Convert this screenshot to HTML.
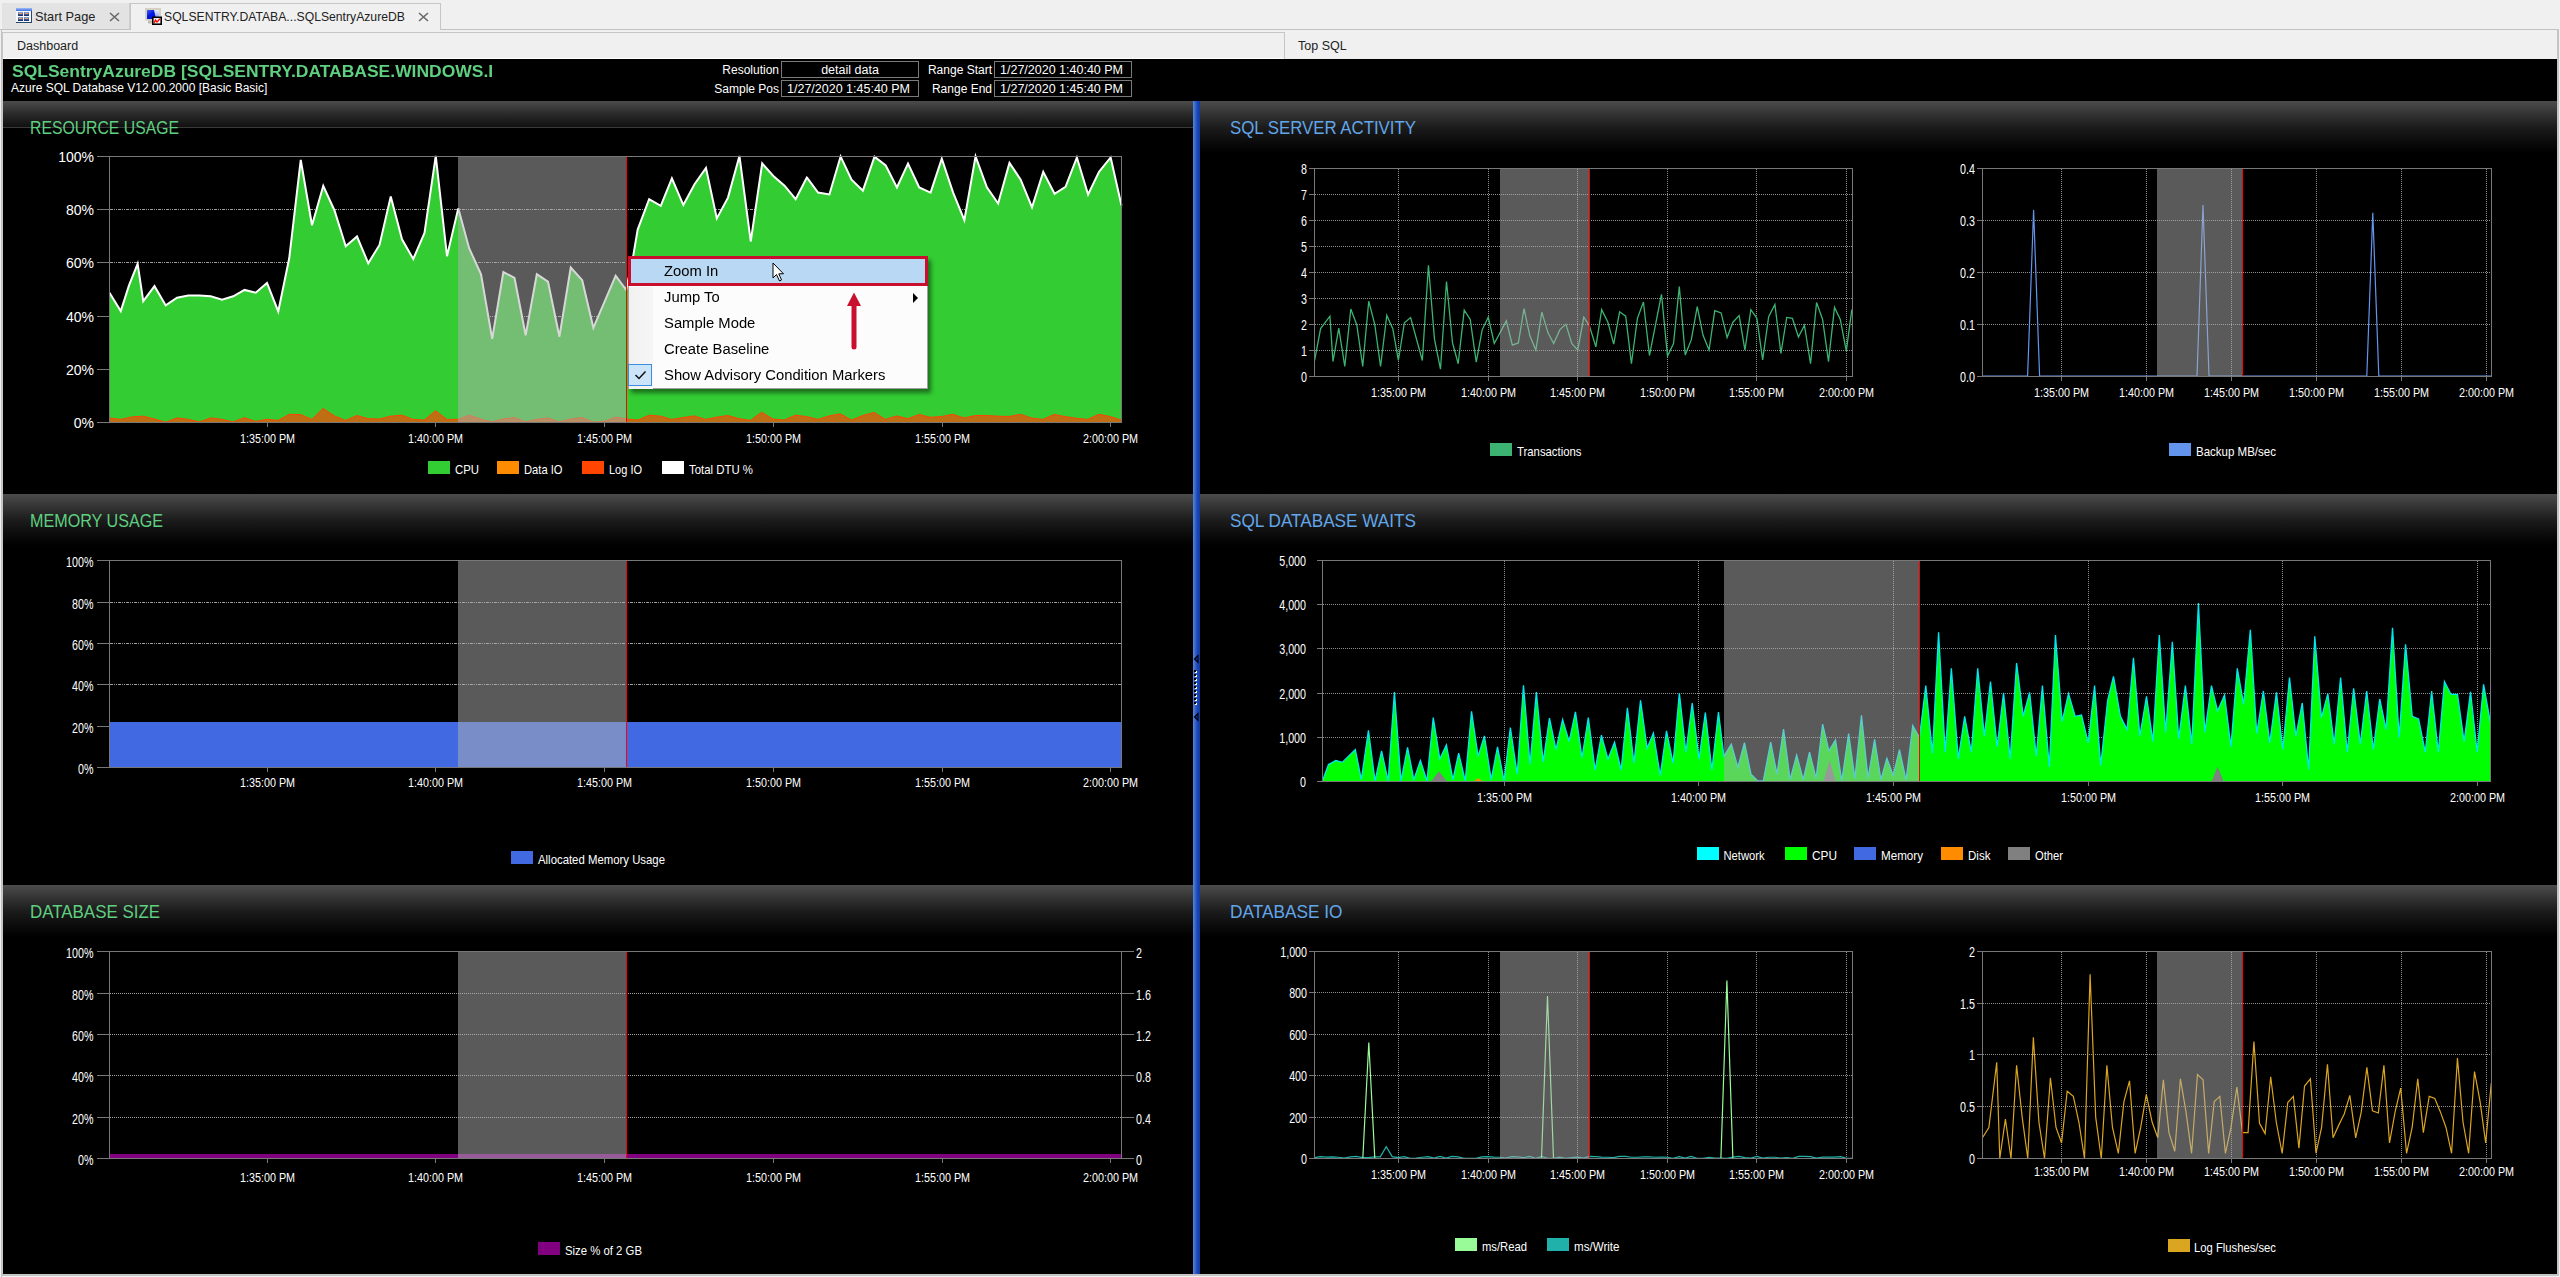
<!DOCTYPE html>
<html><head><meta charset="utf-8"><style>
*{box-sizing:border-box}
html,body{margin:0;padding:0}
body{width:2560px;height:1277px;background:#f0f0f0;position:relative;overflow:hidden;font-family:"Liberation Sans", sans-serif;color:#000}
.abs{position:absolute}
.tab{position:absolute;font-size:13px;white-space:nowrap;line-height:15px}
.fld{position:absolute;border:1px solid #7a7a7a;height:17px;color:#fff;font-size:12.5px;line-height:16px;white-space:nowrap}
.lbl{position:absolute;color:#fff;font-size:12px;white-space:nowrap;text-align:right;line-height:16px}
.mi{position:absolute;left:35px;font-size:15.4px;white-space:nowrap;color:#000;line-height:17px;transform:scaleX(0.962);transform-origin:0 0}
</style></head><body>
<div class="abs" style="left:2px;top:3px;width:128px;height:26px;background:#e3e3e3;border-right:1px solid #cfcfcf"></div>
<div class="abs" style="left:0;top:29px;width:2559px;height:1px;background:#c2c2c2"></div>
<div class="abs" style="left:130px;top:3px;width:311px;height:27px;background:#f0f0f0;border:1px solid #c6c6c6;border-bottom:none"></div>
<div class="abs" style="left:1px;top:29px;width:1px;height:1248px;background:#c2c2c2"></div>
<div class="abs" style="left:2px;top:32px;width:1283px;height:1px;background:#c6c6c6"></div><div class="abs" style="left:3px;top:58px;width:1281px;height:1px;background:#ffffff"></div>
<div class="abs" style="left:2px;top:32px;width:1px;height:1243px;background:#c6c6c6"></div>
<div class="abs" style="left:2557px;top:29px;width:2px;height:1247px;background:#c4c4c4"></div>
<div class="abs" style="left:1px;top:1274px;width:2558px;height:2px;background:#c4c4c4"></div>
<svg class="abs" style="left:16px;top:8px" width="17" height="16" viewBox="0 0 17 16">
<defs><linearGradient id="tb" x1="0" y1="0" x2="0" y2="1"><stop offset="0" stop-color="#9cbcf8"/><stop offset="1" stop-color="#3c6ee4"/></linearGradient>
<linearGradient id="cl" x1="0" y1="0" x2="0" y2="1"><stop offset="0" stop-color="#90a8d0"/><stop offset="1" stop-color="#0c2468"/></linearGradient></defs>
<rect x="0" y="0" width="16" height="15" fill="#2c4468"/>
<rect x="0" y="0" width="15" height="14" fill="#f4f8ff"/>
<rect x="0" y="0" width="16" height="3" fill="url(#tb)"/>
<rect x="2" y="4" width="5" height="4" fill="url(#cl)"/><rect x="8" y="4" width="5" height="4" fill="url(#cl)"/>
<rect x="2" y="9" width="5" height="4" fill="url(#cl)"/><rect x="8" y="9" width="5" height="4" fill="url(#cl)"/>
<rect x="3" y="5" width="3" height="1" fill="#f8a060"/><rect x="9" y="5" width="3" height="1" fill="#f8a060"/>
<rect x="3" y="10" width="3" height="1" fill="#f8a060"/><rect x="9" y="10" width="3" height="1" fill="#f8a060"/>
</svg>
<div class="tab" style="left:35px;top:9px;color:#222;font-size:12.8px">Start Page</div>
<svg class="abs" style="left:109px;top:12px" width="11" height="10" viewBox="0 0 11 10"><path d="M1 1 L10 9 M10 1 L1 9" stroke="#6a6a6a" stroke-width="1.6"/></svg>
<svg class="abs" style="left:145px;top:8px" width="17" height="17" viewBox="0 0 17 17">
<defs><linearGradient id="sl" x1="0" y1="0" x2="1" y2="1"><stop offset="0" stop-color="#5060e0"/><stop offset="0.4" stop-color="#0018e8"/><stop offset="1" stop-color="#0008a8"/></linearGradient>
<linearGradient id="sr" x1="0" y1="0" x2="0" y2="1"><stop offset="0" stop-color="#e8eeff"/><stop offset="1" stop-color="#7890f0"/></linearGradient></defs>
<rect x="0" y="0" width="16" height="12.5" fill="#d4d0c2"/>
<rect x="2" y="2" width="12" height="9" fill="url(#sl)"/>
<path d="M9 2 L14 2 L14 11 L11 11 Z" fill="url(#sr)"/>
<rect x="3" y="12.5" width="5" height="3" fill="#c0bcae"/>
<rect x="7.8" y="9.3" width="8.4" height="6.9" fill="#fff" stroke="#000" stroke-width="1.6"/>
<path d="M9 15 L10.5 12 L12 14 L15 10.8" stroke="#f00" stroke-width="1.3" fill="none"/>
</svg>
<div class="tab" style="left:164px;top:9.7px;color:#222;font-size:12.2px">SQLSENTRY.DATABA...SQLSentryAzureDB</div>
<svg class="abs" style="left:418px;top:12px" width="11" height="10" viewBox="0 0 11 10"><path d="M1 1 L10 9 M10 1 L1 9" stroke="#6a6a6a" stroke-width="1.6"/></svg>
<div class="tab" style="left:17px;top:39px;color:#222;font-size:12.5px">Dashboard</div>
<div class="abs" style="left:1284px;top:32px;width:1px;height:27px;background:#c6c6c6"></div>
<div class="tab" style="left:1298px;top:39px;color:#222;font-size:12.5px">Top SQL</div>
<div class="abs" style="left:3px;top:59px;width:2554px;height:1215px;background:#000"></div>
<div class="abs" style="left:12px;top:62px;color:#5fcf80;font-weight:bold;font-size:16px;white-space:nowrap;line-height:20px;transform:scaleX(1.092);transform-origin:0 0">SQLSentryAzureDB [SQLSENTRY.DATABASE.WINDOWS.I</div>
<div class="abs" style="left:11px;top:81px;color:#fff;font-size:12px;white-space:nowrap;line-height:15px">Azure SQL Database V12.00.2000 [Basic Basic]</div>
<div class="lbl" style="left:680px;top:62px;width:99px">Resolution</div>
<div class="fld" style="left:781px;top:61px;width:138px;text-align:center">detail data</div>
<div class="lbl" style="left:680px;top:81px;width:99px">Sample Pos</div>
<div class="fld" style="left:781px;top:80px;width:138px;padding-left:5px">1/27/2020 1:45:40 PM</div>
<div class="lbl" style="left:880px;top:62px;width:112px">Range Start</div>
<div class="fld" style="left:994px;top:61px;width:138px;padding-left:5px">1/27/2020 1:40:40 PM</div>
<div class="lbl" style="left:880px;top:81px;width:112px">Range End</div>
<div class="fld" style="left:994px;top:80px;width:138px;padding-left:5px">1/27/2020 1:45:40 PM</div>
<div class="abs" style="left:1193px;top:101px;width:7px;height:1173px;background:linear-gradient(to right,#5587dc,#1d48b4 60%,#0f3aa8)"></div>
<svg class="abs" style="left:1193px;top:654px" width="7" height="68"><path d="M5 1.5 L1.5 5 L5 8.5 Z" fill="#10309a" stroke="#000" stroke-width="1.1"/><rect x="1" y="16" width="2" height="2" fill="#000"/><rect x="2" y="17" width="2" height="2" fill="#fff"/><rect x="1" y="16" width="2" height="2" fill="#000"/><rect x="1" y="20" width="2" height="2" fill="#000"/><rect x="2" y="21" width="2" height="2" fill="#fff"/><rect x="1" y="20" width="2" height="2" fill="#000"/><rect x="1" y="24" width="2" height="2" fill="#000"/><rect x="2" y="25" width="2" height="2" fill="#fff"/><rect x="1" y="24" width="2" height="2" fill="#000"/><rect x="1" y="28" width="2" height="2" fill="#000"/><rect x="2" y="29" width="2" height="2" fill="#fff"/><rect x="1" y="28" width="2" height="2" fill="#000"/><rect x="1" y="32" width="2" height="2" fill="#000"/><rect x="2" y="33" width="2" height="2" fill="#fff"/><rect x="1" y="32" width="2" height="2" fill="#000"/><rect x="1" y="36" width="2" height="2" fill="#000"/><rect x="2" y="37" width="2" height="2" fill="#fff"/><rect x="1" y="36" width="2" height="2" fill="#000"/><rect x="1" y="40" width="2" height="2" fill="#000"/><rect x="2" y="41" width="2" height="2" fill="#fff"/><rect x="1" y="40" width="2" height="2" fill="#000"/><rect x="1" y="44" width="2" height="2" fill="#000"/><rect x="2" y="45" width="2" height="2" fill="#fff"/><rect x="1" y="44" width="2" height="2" fill="#000"/><rect x="1" y="48" width="2" height="2" fill="#000"/><rect x="2" y="49" width="2" height="2" fill="#fff"/><rect x="1" y="48" width="2" height="2" fill="#000"/><path d="M5 59.5 L1.5 63 L5 66.5 Z" fill="#10309a" stroke="#000" stroke-width="1.1"/></svg>
<svg class="abs" style="left:0;top:0" width="2560" height="1277" font-family='"Liberation Sans", sans-serif'>
<defs>
<linearGradient id="hg" x1="0" y1="0" x2="0" y2="1">
<stop offset="0" stop-color="#4c4c4c"/><stop offset="0.25" stop-color="#333"/><stop offset="0.5" stop-color="#1c1c1c"/><stop offset="0.8" stop-color="#0a0a0a"/><stop offset="1" stop-color="#000"/>
</linearGradient>
<linearGradient id="hg2" x1="0" y1="0" x2="0" y2="1">
<stop offset="0" stop-color="#4c4c4c"/><stop offset="0.5" stop-color="#2a2a2a"/><stop offset="1" stop-color="#101010"/>
</linearGradient>
</defs>
<rect x="3" y="101" width="1190" height="26" fill="url(#hg2)"/>
<rect x="3" y="127" width="1190" height="1" fill="#3a3a3a"/>
<rect x="1200" y="101" width="1357" height="52" fill="url(#hg)"/>
<rect x="3" y="494" width="1190" height="52" fill="url(#hg)"/>
<rect x="1200" y="494" width="1357" height="52" fill="url(#hg)"/>
<rect x="3" y="885" width="1190" height="52" fill="url(#hg)"/>
<rect x="1200" y="885" width="1357" height="52" fill="url(#hg)"/>
<text x="30" y="134" font-size="17.5" fill="#5fcf80" textLength="149" lengthAdjust="spacingAndGlyphs">RESOURCE USAGE</text>
<text x="30" y="527" font-size="17.5" fill="#5fcf80" textLength="133" lengthAdjust="spacingAndGlyphs">MEMORY USAGE</text>
<text x="30" y="918" font-size="17.5" fill="#5fcf80" textLength="130" lengthAdjust="spacingAndGlyphs">DATABASE SIZE</text>
<text x="1230" y="134" font-size="17.5" fill="#62a6ea" textLength="186" lengthAdjust="spacingAndGlyphs">SQL SERVER ACTIVITY</text>
<text x="1230" y="527" font-size="17.5" fill="#62a6ea" textLength="186" lengthAdjust="spacingAndGlyphs">SQL DATABASE WAITS</text>
<text x="1230" y="918" font-size="17.5" fill="#62a6ea" textLength="112.5" lengthAdjust="spacingAndGlyphs">DATABASE IO</text>
<line x1="110" y1="209.5" x2="1121" y2="209.5" stroke="#a0a0a0" stroke-width="1" stroke-dasharray="3,1,1,1,1,1"/>
<line x1="110" y1="262.5" x2="1121" y2="262.5" stroke="#a0a0a0" stroke-width="1" stroke-dasharray="3,1,1,1,1,1"/>
<line x1="110" y1="316.5" x2="1121" y2="316.5" stroke="#a0a0a0" stroke-width="1" stroke-dasharray="3,1,1,1,1,1"/>
<line x1="110" y1="369.5" x2="1121" y2="369.5" stroke="#a0a0a0" stroke-width="1" stroke-dasharray="3,1,1,1,1,1"/>
<polygon points="109.5,422.5 109.5,292.74 120.75,311.02 128.91,285.71 137.63,263.91 143.25,301.17 154.5,286.13 165.75,305.39 177,297.66 188.25,295.55 199.5,295.55 210.75,296.25 222,299.77 233.25,296.25 244.5,289.92 255.75,292.74 267,282.89 278.25,311.44 289.22,258.28 300.75,159.84 312,225.24 323.25,185.86 334.5,210.47 345.75,246.33 357,236.49 368.25,263.2 379.5,244.92 390.75,196.41 402,239.3 413.25,258.99 424.5,232.97 435.76,155.91 447.01,256.17 458.26,208.36 469.13,248.19 481.03,274.22 492.19,338.93 503.35,271.99 514.51,277.94 525.66,335.21 536.82,274.22 547.98,281.66 559.43,336.7 570.74,267.52 582.19,280.17 593.35,327.77 615.67,275.71 626.08,289.84 633.52,254.14 637.68,229.59 649.14,199.09 660.74,205.79 671.9,178.27 683.35,205.04 694.51,184.22 705.97,167.85 716.83,218.43 727.98,197.6 739.44,155.95 750.75,241.49 762.2,163.39 773.36,176.03 784.52,185.7 795.67,199.09 806.83,177.52 807.09,177.71 818.05,192.54 829.39,194.47 840.6,156.44 851.56,179.65 862.9,190.6 874.5,156.7 885.72,165.47 896.93,187.38 908.02,163.53 919.23,187.38 930.57,192.54 941.79,158.77 953.13,192.54 964.35,220.25 975.56,156.44 986.9,187.38 998.12,203.49 1009.46,162.89 1020.68,179.65 1032.02,207.36 1043.23,171.91 1054.58,193.83 1065.53,186.74 1076.88,157.48 1088.09,194.47 1099.05,171.91 1110.65,157.48 1121.5,205.43 1121.5,422.5" fill="#33cc33"/>
<polygon points="109.5,422.5 109.5,418 120.74,419.4 131.99,416.9 143.23,416.2 154.48,419 165.72,422.2 176.97,417.9 188.21,419.4 199.46,421.9 210.7,417.9 221.94,419.4 233.19,421.9 244.43,417.7 255.68,421.4 266.92,419.3 278.17,420.4 289.41,414.3 300.66,414.6 311.9,419.4 323.14,408.4 334.39,415.9 345.63,420.4 356.88,415.5 368.12,418.7 379.37,419 390.61,416.2 401.86,415.2 413.1,419.4 424.34,420.1 435.59,410.7 446.83,419.4 458.08,419.4 469.32,415.2 480.57,419 491.81,421.9 503.06,419 514.3,417.6 525.54,421.9 536.79,419.3 548.03,418 559.28,421.9 570.52,419 581.77,417.6 593.01,421.9 604.26,421.4 615.5,417.2 626.74,419 637.99,420.1 649.23,415.2 660.48,416.2 671.72,419.4 682.97,417.6 694.21,415.9 705.46,419.4 716.7,417.2 727.94,415.5 739.19,418.7 750.43,420.4 761.68,412.2 772.92,419 784.17,420.1 795.41,415.2 806.66,416.6 817.9,419.4 829.14,415.9 840.39,413.8 851.63,420.1 862.88,415.5 874.12,412.4 885.37,419.4 896.61,415.9 907.86,418.7 919.1,414.5 930.34,417.3 941.59,416.5 952.83,414.3 964.08,418 975.32,415.5 986.57,415.5 997.81,416.2 1009.06,416.5 1020.3,414.3 1031.54,418 1042.79,419.4 1054.03,414.5 1065.28,416.6 1076.52,418.3 1087.77,419.4 1099.01,414.3 1110.26,416.6 1121.5,420.1 1121.5,422.5" fill="#bf6e14"/>
<polyline points="109.5,418 120.74,419.4 131.99,416.9 143.23,416.2 154.48,419 165.72,422.2 176.97,417.9 188.21,419.4 199.46,421.9 210.7,417.9 221.94,419.4 233.19,421.9 244.43,417.7 255.68,421.4 266.92,419.3 278.17,420.4 289.41,414.3 300.66,414.6 311.9,419.4 323.14,408.4 334.39,415.9 345.63,420.4 356.88,415.5 368.12,418.7 379.37,419 390.61,416.2 401.86,415.2 413.1,419.4 424.34,420.1 435.59,410.7 446.83,419.4 458.08,419.4 469.32,415.2 480.57,419 491.81,421.9 503.06,419 514.3,417.6 525.54,421.9 536.79,419.3 548.03,418 559.28,421.9 570.52,419 581.77,417.6 593.01,421.9 604.26,421.4 615.5,417.2 626.74,419 637.99,420.1 649.23,415.2 660.48,416.2 671.72,419.4 682.97,417.6 694.21,415.9 705.46,419.4 716.7,417.2 727.94,415.5 739.19,418.7 750.43,420.4 761.68,412.2 772.92,419 784.17,420.1 795.41,415.2 806.66,416.6 817.9,419.4 829.14,415.9 840.39,413.8 851.63,420.1 862.88,415.5 874.12,412.4 885.37,419.4 896.61,415.9 907.86,418.7 919.1,414.5 930.34,417.3 941.59,416.5 952.83,414.3 964.08,418 975.32,415.5 986.57,415.5 997.81,416.2 1009.06,416.5 1020.3,414.3 1031.54,418 1042.79,419.4 1054.03,414.5 1065.28,416.6 1076.52,418.3 1087.77,419.4 1099.01,414.3 1110.26,416.6 1121.5,420.1" fill="none" stroke="#ff4500" stroke-width="1"/>
<polyline points="109.5,292.74 120.75,311.02 128.91,285.71 137.63,263.91 143.25,301.17 154.5,286.13 165.75,305.39 177,297.66 188.25,295.55 199.5,295.55 210.75,296.25 222,299.77 233.25,296.25 244.5,289.92 255.75,292.74 267,282.89 278.25,311.44 289.22,258.28 300.75,159.84 312,225.24 323.25,185.86 334.5,210.47 345.75,246.33 357,236.49 368.25,263.2 379.5,244.92 390.75,196.41 402,239.3 413.25,258.99 424.5,232.97 435.76,155.91 447.01,256.17 458.26,208.36 469.13,248.19 481.03,274.22 492.19,338.93 503.35,271.99 514.51,277.94 525.66,335.21 536.82,274.22 547.98,281.66 559.43,336.7 570.74,267.52 582.19,280.17 593.35,327.77 615.67,275.71 626.08,289.84 633.52,254.14 637.68,229.59 649.14,199.09 660.74,205.79 671.9,178.27 683.35,205.04 694.51,184.22 705.97,167.85 716.83,218.43 727.98,197.6 739.44,155.95 750.75,241.49 762.2,163.39 773.36,176.03 784.52,185.7 795.67,199.09 806.83,177.52 807.09,177.71 818.05,192.54 829.39,194.47 840.6,156.44 851.56,179.65 862.9,190.6 874.5,156.7 885.72,165.47 896.93,187.38 908.02,163.53 919.23,187.38 930.57,192.54 941.79,158.77 953.13,192.54 964.35,220.25 975.56,156.44 986.9,187.38 998.12,203.49 1009.46,162.89 1020.68,179.65 1032.02,207.36 1043.23,171.91 1054.58,193.83 1065.53,186.74 1076.88,157.48 1088.09,194.47 1099.05,171.91 1110.65,157.48 1121.5,205.43" fill="none" stroke="#ffffff" stroke-width="2"/>
<rect x="458" y="157" width="168" height="265" fill="rgb(176,176,176)" fill-opacity="0.51"/><rect x="626" y="157" width="1" height="265" fill="#ff0000"/>
<rect x="109.5" y="156.5" width="1012" height="266" fill="none" stroke="#787878" stroke-width="1"/>
<rect x="97" y="422" width="12" height="1" fill="#787878"/>
<text x="94" y="428" font-size="14" text-anchor="end" fill="#fff" >0%</text>
<rect x="97" y="369" width="12" height="1" fill="#787878"/>
<text x="94" y="375" font-size="14" text-anchor="end" fill="#fff" >20%</text>
<rect x="97" y="316" width="12" height="1" fill="#787878"/>
<text x="94" y="322" font-size="14" text-anchor="end" fill="#fff" >40%</text>
<rect x="97" y="262" width="12" height="1" fill="#787878"/>
<text x="94" y="268" font-size="14" text-anchor="end" fill="#fff" >60%</text>
<rect x="97" y="209" width="12" height="1" fill="#787878"/>
<text x="94" y="215" font-size="14" text-anchor="end" fill="#fff" >80%</text>
<rect x="97" y="156" width="12" height="1" fill="#787878"/>
<text x="94" y="162" font-size="14" text-anchor="end" fill="#fff" >100%</text>
<rect x="267" y="423" width="1" height="4" fill="#787878"/>
<text transform="translate(267.5,443) scale(0.83,1)" font-size="13" text-anchor="middle" fill="#fff" >1:35:00 PM</text>
<rect x="435" y="423" width="1" height="4" fill="#787878"/>
<text transform="translate(435.5,443) scale(0.83,1)" font-size="13" text-anchor="middle" fill="#fff" >1:40:00 PM</text>
<rect x="604" y="423" width="1" height="4" fill="#787878"/>
<text transform="translate(604.5,443) scale(0.83,1)" font-size="13" text-anchor="middle" fill="#fff" >1:45:00 PM</text>
<rect x="773" y="423" width="1" height="4" fill="#787878"/>
<text transform="translate(773.5,443) scale(0.83,1)" font-size="13" text-anchor="middle" fill="#fff" >1:50:00 PM</text>
<rect x="942" y="423" width="1" height="4" fill="#787878"/>
<text transform="translate(942.5,443) scale(0.83,1)" font-size="13" text-anchor="middle" fill="#fff" >1:55:00 PM</text>
<rect x="1110" y="423" width="1" height="4" fill="#787878"/>
<text transform="translate(1110.5,443) scale(0.83,1)" font-size="13" text-anchor="middle" fill="#fff" >2:00:00 PM</text>
<rect x="428" y="461" width="22" height="13" fill="#32cd32"/><text x="455" y="474" font-size="13" fill="#fff" textLength="24" lengthAdjust="spacingAndGlyphs">CPU</text><rect x="497" y="461" width="22" height="13" fill="#ff8c00"/><text x="524" y="474" font-size="13" fill="#fff" textLength="38.5" lengthAdjust="spacingAndGlyphs">Data IO</text><rect x="582" y="461" width="22" height="13" fill="#ff4500"/><text x="609" y="474" font-size="13" fill="#fff" textLength="33" lengthAdjust="spacingAndGlyphs">Log IO</text><rect x="662" y="461" width="22" height="13" fill="#ffffff"/><text x="689" y="474" font-size="13" fill="#fff" textLength="64" lengthAdjust="spacingAndGlyphs">Total DTU %</text>
<line x1="110" y1="602.5" x2="1121" y2="602.5" stroke="#a0a0a0" stroke-width="1" stroke-dasharray="3,1,1,1,1,1"/>
<line x1="110" y1="643.5" x2="1121" y2="643.5" stroke="#a0a0a0" stroke-width="1" stroke-dasharray="3,1,1,1,1,1"/>
<line x1="110" y1="684.5" x2="1121" y2="684.5" stroke="#a0a0a0" stroke-width="1" stroke-dasharray="3,1,1,1,1,1"/>
<line x1="110" y1="726.5" x2="1121" y2="726.5" stroke="#a0a0a0" stroke-width="1" stroke-dasharray="3,1,1,1,1,1"/>
<rect x="110" y="722" width="1011" height="45" fill="#4169e1"/>
<rect x="458" y="561" width="168" height="206" fill="rgb(176,176,176)" fill-opacity="0.51"/><rect x="626" y="561" width="1" height="206" fill="#ff0000"/>
<rect x="109.5" y="560.5" width="1012" height="207" fill="none" stroke="#787878" stroke-width="1"/>
<rect x="97" y="767" width="12" height="1" fill="#787878"/>
<text transform="translate(93.5,774) scale(0.765,1)" font-size="14" text-anchor="end" fill="#fff" >0%</text>
<rect x="97" y="726" width="12" height="1" fill="#787878"/>
<text transform="translate(93.5,733) scale(0.765,1)" font-size="14" text-anchor="end" fill="#fff" >20%</text>
<rect x="97" y="684" width="12" height="1" fill="#787878"/>
<text transform="translate(93.5,691) scale(0.765,1)" font-size="14" text-anchor="end" fill="#fff" >40%</text>
<rect x="97" y="643" width="12" height="1" fill="#787878"/>
<text transform="translate(93.5,650) scale(0.765,1)" font-size="14" text-anchor="end" fill="#fff" >60%</text>
<rect x="97" y="602" width="12" height="1" fill="#787878"/>
<text transform="translate(93.5,609) scale(0.765,1)" font-size="14" text-anchor="end" fill="#fff" >80%</text>
<rect x="97" y="560" width="12" height="1" fill="#787878"/>
<text transform="translate(93.5,567) scale(0.765,1)" font-size="14" text-anchor="end" fill="#fff" >100%</text>
<rect x="267" y="768" width="1" height="4" fill="#787878"/>
<text transform="translate(267.5,787) scale(0.83,1)" font-size="13" text-anchor="middle" fill="#fff" >1:35:00 PM</text>
<rect x="435" y="768" width="1" height="4" fill="#787878"/>
<text transform="translate(435.5,787) scale(0.83,1)" font-size="13" text-anchor="middle" fill="#fff" >1:40:00 PM</text>
<rect x="604" y="768" width="1" height="4" fill="#787878"/>
<text transform="translate(604.5,787) scale(0.83,1)" font-size="13" text-anchor="middle" fill="#fff" >1:45:00 PM</text>
<rect x="773" y="768" width="1" height="4" fill="#787878"/>
<text transform="translate(773.5,787) scale(0.83,1)" font-size="13" text-anchor="middle" fill="#fff" >1:50:00 PM</text>
<rect x="942" y="768" width="1" height="4" fill="#787878"/>
<text transform="translate(942.5,787) scale(0.83,1)" font-size="13" text-anchor="middle" fill="#fff" >1:55:00 PM</text>
<rect x="1110" y="768" width="1" height="4" fill="#787878"/>
<text transform="translate(1110.5,787) scale(0.83,1)" font-size="13" text-anchor="middle" fill="#fff" >2:00:00 PM</text>
<rect x="511" y="851" width="22" height="13" fill="#4169e1"/><text x="538" y="864" font-size="13" fill="#fff" textLength="127" lengthAdjust="spacingAndGlyphs">Allocated Memory Usage</text>
<line x1="110" y1="993.5" x2="1121" y2="993.5" stroke="#a0a0a0" stroke-width="1" stroke-dasharray="1,1"/>
<line x1="110" y1="1034.5" x2="1121" y2="1034.5" stroke="#a0a0a0" stroke-width="1" stroke-dasharray="1,1"/>
<line x1="110" y1="1075.5" x2="1121" y2="1075.5" stroke="#a0a0a0" stroke-width="1" stroke-dasharray="1,1"/>
<line x1="110" y1="1117.5" x2="1121" y2="1117.5" stroke="#a0a0a0" stroke-width="1" stroke-dasharray="1,1"/>
<rect x="110" y="1154" width="1011" height="4" fill="#800080"/>
<rect x="458" y="952" width="168" height="206" fill="rgb(176,176,176)" fill-opacity="0.51"/><rect x="626" y="952" width="1" height="206" fill="#ff0000"/>
<rect x="109.5" y="951.5" width="1012" height="207" fill="none" stroke="#787878" stroke-width="1"/>
<rect x="97" y="1158" width="12" height="1" fill="#787878"/>
<text transform="translate(93.5,1165) scale(0.765,1)" font-size="14" text-anchor="end" fill="#fff" >0%</text>
<rect x="1122" y="1158" width="12" height="1" fill="#787878"/>
<text transform="translate(1136,1165) scale(0.765,1)" font-size="14" text-anchor="start" fill="#fff" >0</text>
<rect x="97" y="1117" width="12" height="1" fill="#787878"/>
<text transform="translate(93.5,1124) scale(0.765,1)" font-size="14" text-anchor="end" fill="#fff" >20%</text>
<rect x="1122" y="1117" width="12" height="1" fill="#787878"/>
<text transform="translate(1136,1124) scale(0.765,1)" font-size="14" text-anchor="start" fill="#fff" >0.4</text>
<rect x="97" y="1075" width="12" height="1" fill="#787878"/>
<text transform="translate(93.5,1082) scale(0.765,1)" font-size="14" text-anchor="end" fill="#fff" >40%</text>
<rect x="1122" y="1075" width="12" height="1" fill="#787878"/>
<text transform="translate(1136,1082) scale(0.765,1)" font-size="14" text-anchor="start" fill="#fff" >0.8</text>
<rect x="97" y="1034" width="12" height="1" fill="#787878"/>
<text transform="translate(93.5,1041) scale(0.765,1)" font-size="14" text-anchor="end" fill="#fff" >60%</text>
<rect x="1122" y="1034" width="12" height="1" fill="#787878"/>
<text transform="translate(1136,1041) scale(0.765,1)" font-size="14" text-anchor="start" fill="#fff" >1.2</text>
<rect x="97" y="993" width="12" height="1" fill="#787878"/>
<text transform="translate(93.5,1000) scale(0.765,1)" font-size="14" text-anchor="end" fill="#fff" >80%</text>
<rect x="1122" y="993" width="12" height="1" fill="#787878"/>
<text transform="translate(1136,1000) scale(0.765,1)" font-size="14" text-anchor="start" fill="#fff" >1.6</text>
<rect x="97" y="951" width="12" height="1" fill="#787878"/>
<text transform="translate(93.5,958) scale(0.765,1)" font-size="14" text-anchor="end" fill="#fff" >100%</text>
<rect x="1122" y="951" width="12" height="1" fill="#787878"/>
<text transform="translate(1136,958) scale(0.765,1)" font-size="14" text-anchor="start" fill="#fff" >2</text>
<rect x="267" y="1159" width="1" height="4" fill="#787878"/>
<text transform="translate(267.5,1182) scale(0.83,1)" font-size="13" text-anchor="middle" fill="#fff" >1:35:00 PM</text>
<rect x="435" y="1159" width="1" height="4" fill="#787878"/>
<text transform="translate(435.5,1182) scale(0.83,1)" font-size="13" text-anchor="middle" fill="#fff" >1:40:00 PM</text>
<rect x="604" y="1159" width="1" height="4" fill="#787878"/>
<text transform="translate(604.5,1182) scale(0.83,1)" font-size="13" text-anchor="middle" fill="#fff" >1:45:00 PM</text>
<rect x="773" y="1159" width="1" height="4" fill="#787878"/>
<text transform="translate(773.5,1182) scale(0.83,1)" font-size="13" text-anchor="middle" fill="#fff" >1:50:00 PM</text>
<rect x="942" y="1159" width="1" height="4" fill="#787878"/>
<text transform="translate(942.5,1182) scale(0.83,1)" font-size="13" text-anchor="middle" fill="#fff" >1:55:00 PM</text>
<rect x="1110" y="1159" width="1" height="4" fill="#787878"/>
<text transform="translate(1110.5,1182) scale(0.83,1)" font-size="13" text-anchor="middle" fill="#fff" >2:00:00 PM</text>
<rect x="538" y="1242" width="22" height="13" fill="#800080"/><text x="565" y="1255" font-size="13" fill="#fff" textLength="77" lengthAdjust="spacingAndGlyphs">Size % of 2 GB</text>
<line x1="1315" y1="194.5" x2="1852" y2="194.5" stroke="#8e8e8e" stroke-width="1" stroke-dasharray="1,1"/>
<line x1="1315" y1="220.5" x2="1852" y2="220.5" stroke="#8e8e8e" stroke-width="1" stroke-dasharray="1,1"/>
<line x1="1315" y1="246.5" x2="1852" y2="246.5" stroke="#8e8e8e" stroke-width="1" stroke-dasharray="1,1"/>
<line x1="1315" y1="272.5" x2="1852" y2="272.5" stroke="#8e8e8e" stroke-width="1" stroke-dasharray="1,1"/>
<line x1="1315" y1="298.5" x2="1852" y2="298.5" stroke="#8e8e8e" stroke-width="1" stroke-dasharray="1,1"/>
<line x1="1315" y1="324.5" x2="1852" y2="324.5" stroke="#8e8e8e" stroke-width="1" stroke-dasharray="1,1"/>
<line x1="1315" y1="350.5" x2="1852" y2="350.5" stroke="#8e8e8e" stroke-width="1" stroke-dasharray="1,1"/>
<line x1="1398.5" y1="169" x2="1398.5" y2="376" stroke="#8e8e8e" stroke-width="1" stroke-dasharray="1,1"/>
<line x1="1488.5" y1="169" x2="1488.5" y2="376" stroke="#8e8e8e" stroke-width="1" stroke-dasharray="1,1"/>
<line x1="1577.5" y1="169" x2="1577.5" y2="376" stroke="#8e8e8e" stroke-width="1" stroke-dasharray="1,1"/>
<line x1="1667.5" y1="169" x2="1667.5" y2="376" stroke="#8e8e8e" stroke-width="1" stroke-dasharray="1,1"/>
<line x1="1756.5" y1="169" x2="1756.5" y2="376" stroke="#8e8e8e" stroke-width="1" stroke-dasharray="1,1"/>
<line x1="1846.5" y1="169" x2="1846.5" y2="376" stroke="#8e8e8e" stroke-width="1" stroke-dasharray="1,1"/>
<polyline points="1314.59,360.47 1320.61,328.53 1329.91,316.17 1332.97,361.56 1338.77,328.2 1344.78,366.48 1350.8,309.06 1356.81,324.92 1362.72,366.48 1368.73,301.19 1374.75,324.37 1380.55,366.48 1386.78,315.41 1392.8,328.75 1398.37,360.47 1404.39,322.73 1410.62,317.59 1422.33,360.47 1428.45,265.31 1434.47,339.14 1440.48,369.22 1446.5,281.5 1452.51,342.97 1458.2,363.75 1464.22,310.16 1470.23,319.45 1476.25,362.11 1482.15,329.84 1488.28,317.26 1494.29,343.51 1506.33,320.87 1512.34,345.15 1518.36,342.97 1524.04,308.51 1529.84,335.86 1535.86,350.08 1541.87,312.12 1547.89,332.58 1553.68,343.51 1559.92,329.62 1565.93,324.37 1571.73,343.51 1577.75,350.08 1583.76,317.26 1589.3,325.47 1595.86,346.8 1601.66,309.61 1607.89,322.19 1613.69,344.06 1619.59,311.8 1625.72,316.17 1631.41,363.75 1637.42,318.36 1643.44,301.95 1649.45,355.55 1655.47,324.92 1661.48,294.3 1667.5,356.09 1673.51,343.51 1679.31,286.64 1685.22,355 1691.34,339.69 1697.25,306.66 1703.04,335.31 1709.06,350.08 1714.75,310.7 1721.09,312.89 1727.11,337.5 1732.9,322.19 1739.14,315.62 1744.93,350.08 1750.84,309.61 1756.86,318.36 1762.65,359.92 1768.67,316.72 1774.9,304.47 1780.92,353.36 1786.72,317.48 1792.4,318.36 1798.42,336.95 1804.43,325.25 1810.56,363.75 1816.57,302.5 1822.59,319.45 1828.5,361.56 1834.51,307.42 1840.31,319.45 1846.32,351.17 1851.79,309.61" fill="none" stroke="#3cb371" stroke-width="1.3"/>
<rect x="1500" y="169" width="89" height="207" fill="rgb(176,176,176)" fill-opacity="0.51"/><rect x="1589" y="169" width="1" height="207" fill="#ff0000"/>
<rect x="1314.5" y="168.5" width="538" height="208" fill="none" stroke="#787878" stroke-width="1"/>
<rect x="1309" y="376" width="5" height="1" fill="#787878"/>
<text transform="translate(1307,382) scale(0.765,1)" font-size="14" text-anchor="end" fill="#fff" >0</text>
<rect x="1309" y="350" width="5" height="1" fill="#787878"/>
<text transform="translate(1307,356) scale(0.765,1)" font-size="14" text-anchor="end" fill="#fff" >1</text>
<rect x="1309" y="324" width="5" height="1" fill="#787878"/>
<text transform="translate(1307,330) scale(0.765,1)" font-size="14" text-anchor="end" fill="#fff" >2</text>
<rect x="1309" y="298" width="5" height="1" fill="#787878"/>
<text transform="translate(1307,304) scale(0.765,1)" font-size="14" text-anchor="end" fill="#fff" >3</text>
<rect x="1309" y="272" width="5" height="1" fill="#787878"/>
<text transform="translate(1307,278) scale(0.765,1)" font-size="14" text-anchor="end" fill="#fff" >4</text>
<rect x="1309" y="246" width="5" height="1" fill="#787878"/>
<text transform="translate(1307,252) scale(0.765,1)" font-size="14" text-anchor="end" fill="#fff" >5</text>
<rect x="1309" y="220" width="5" height="1" fill="#787878"/>
<text transform="translate(1307,226) scale(0.765,1)" font-size="14" text-anchor="end" fill="#fff" >6</text>
<rect x="1309" y="194" width="5" height="1" fill="#787878"/>
<text transform="translate(1307,200) scale(0.765,1)" font-size="14" text-anchor="end" fill="#fff" >7</text>
<rect x="1309" y="168" width="5" height="1" fill="#787878"/>
<text transform="translate(1307,174) scale(0.765,1)" font-size="14" text-anchor="end" fill="#fff" >8</text>
<rect x="1398" y="377" width="1" height="4" fill="#787878"/>
<text transform="translate(1398.5,397) scale(0.83,1)" font-size="13" text-anchor="middle" fill="#fff" >1:35:00 PM</text>
<rect x="1488" y="377" width="1" height="4" fill="#787878"/>
<text transform="translate(1488.5,397) scale(0.83,1)" font-size="13" text-anchor="middle" fill="#fff" >1:40:00 PM</text>
<rect x="1577" y="377" width="1" height="4" fill="#787878"/>
<text transform="translate(1577.5,397) scale(0.83,1)" font-size="13" text-anchor="middle" fill="#fff" >1:45:00 PM</text>
<rect x="1667" y="377" width="1" height="4" fill="#787878"/>
<text transform="translate(1667.5,397) scale(0.83,1)" font-size="13" text-anchor="middle" fill="#fff" >1:50:00 PM</text>
<rect x="1756" y="377" width="1" height="4" fill="#787878"/>
<text transform="translate(1756.5,397) scale(0.83,1)" font-size="13" text-anchor="middle" fill="#fff" >1:55:00 PM</text>
<rect x="1846" y="377" width="1" height="4" fill="#787878"/>
<text transform="translate(1846.5,397) scale(0.83,1)" font-size="13" text-anchor="middle" fill="#fff" >2:00:00 PM</text>
<rect x="1490" y="443" width="22" height="13" fill="#3cb371"/><text x="1517" y="456" font-size="13" fill="#fff" textLength="64.5" lengthAdjust="spacingAndGlyphs">Transactions</text>
<line x1="1983" y1="220.5" x2="2491" y2="220.5" stroke="#8e8e8e" stroke-width="1" stroke-dasharray="1,1"/>
<line x1="1983" y1="272.5" x2="2491" y2="272.5" stroke="#8e8e8e" stroke-width="1" stroke-dasharray="1,1"/>
<line x1="1983" y1="324.5" x2="2491" y2="324.5" stroke="#8e8e8e" stroke-width="1" stroke-dasharray="1,1"/>
<line x1="2061.5" y1="169" x2="2061.5" y2="376" stroke="#8e8e8e" stroke-width="1" stroke-dasharray="1,1"/>
<line x1="2146.5" y1="169" x2="2146.5" y2="376" stroke="#8e8e8e" stroke-width="1" stroke-dasharray="1,1"/>
<line x1="2231.5" y1="169" x2="2231.5" y2="376" stroke="#8e8e8e" stroke-width="1" stroke-dasharray="1,1"/>
<line x1="2316.5" y1="169" x2="2316.5" y2="376" stroke="#8e8e8e" stroke-width="1" stroke-dasharray="1,1"/>
<line x1="2401.5" y1="169" x2="2401.5" y2="376" stroke="#8e8e8e" stroke-width="1" stroke-dasharray="1,1"/>
<line x1="2486.5" y1="169" x2="2486.5" y2="376" stroke="#8e8e8e" stroke-width="1" stroke-dasharray="1,1"/>
<polyline points="1982.5,376 2027.6,376 2033.6,210.1 2039.6,376 2197,376 2203,204.9 2209,376 2366.8,376 2372.8,212.7 2378.8,376 2491,376" fill="none" stroke="#6495ed" stroke-width="1.2"/>
<rect x="2157" y="169" width="85" height="207" fill="rgb(176,176,176)" fill-opacity="0.51"/><rect x="2242" y="169" width="1" height="207" fill="#ff0000"/>
<rect x="1982.5" y="168.5" width="509" height="208" fill="none" stroke="#787878" stroke-width="1"/>
<rect x="1977" y="376" width="5" height="1" fill="#787878"/>
<text transform="translate(1975,382) scale(0.765,1)" font-size="14" text-anchor="end" fill="#fff" >0.0</text>
<rect x="1977" y="324" width="5" height="1" fill="#787878"/>
<text transform="translate(1975,330) scale(0.765,1)" font-size="14" text-anchor="end" fill="#fff" >0.1</text>
<rect x="1977" y="272" width="5" height="1" fill="#787878"/>
<text transform="translate(1975,278) scale(0.765,1)" font-size="14" text-anchor="end" fill="#fff" >0.2</text>
<rect x="1977" y="220" width="5" height="1" fill="#787878"/>
<text transform="translate(1975,226) scale(0.765,1)" font-size="14" text-anchor="end" fill="#fff" >0.3</text>
<rect x="1977" y="168" width="5" height="1" fill="#787878"/>
<text transform="translate(1975,174) scale(0.765,1)" font-size="14" text-anchor="end" fill="#fff" >0.4</text>
<rect x="2061" y="377" width="1" height="4" fill="#787878"/>
<text transform="translate(2061.5,397) scale(0.83,1)" font-size="13" text-anchor="middle" fill="#fff" >1:35:00 PM</text>
<rect x="2146" y="377" width="1" height="4" fill="#787878"/>
<text transform="translate(2146.5,397) scale(0.83,1)" font-size="13" text-anchor="middle" fill="#fff" >1:40:00 PM</text>
<rect x="2231" y="377" width="1" height="4" fill="#787878"/>
<text transform="translate(2231.5,397) scale(0.83,1)" font-size="13" text-anchor="middle" fill="#fff" >1:45:00 PM</text>
<rect x="2316" y="377" width="1" height="4" fill="#787878"/>
<text transform="translate(2316.5,397) scale(0.83,1)" font-size="13" text-anchor="middle" fill="#fff" >1:50:00 PM</text>
<rect x="2401" y="377" width="1" height="4" fill="#787878"/>
<text transform="translate(2401.5,397) scale(0.83,1)" font-size="13" text-anchor="middle" fill="#fff" >1:55:00 PM</text>
<rect x="2486" y="377" width="1" height="4" fill="#787878"/>
<text transform="translate(2486.5,397) scale(0.83,1)" font-size="13" text-anchor="middle" fill="#fff" >2:00:00 PM</text>
<rect x="2169" y="443" width="22" height="13" fill="#6495ed"/><text x="2196" y="456" font-size="13" fill="#fff" textLength="80" lengthAdjust="spacingAndGlyphs">Backup MB/sec</text>
<line x1="1323" y1="604.5" x2="2490" y2="604.5" stroke="#8e8e8e" stroke-width="1" stroke-dasharray="1,1"/>
<line x1="1323" y1="648.5" x2="2490" y2="648.5" stroke="#8e8e8e" stroke-width="1" stroke-dasharray="1,1"/>
<line x1="1323" y1="693.5" x2="2490" y2="693.5" stroke="#8e8e8e" stroke-width="1" stroke-dasharray="1,1"/>
<line x1="1323" y1="737.5" x2="2490" y2="737.5" stroke="#8e8e8e" stroke-width="1" stroke-dasharray="1,1"/>
<line x1="1504.5" y1="561" x2="1504.5" y2="781" stroke="#8e8e8e" stroke-width="1" stroke-dasharray="1,1"/>
<line x1="1698.5" y1="561" x2="1698.5" y2="781" stroke="#8e8e8e" stroke-width="1" stroke-dasharray="1,1"/>
<line x1="1893.5" y1="561" x2="1893.5" y2="781" stroke="#8e8e8e" stroke-width="1" stroke-dasharray="1,1"/>
<line x1="2088.5" y1="561" x2="2088.5" y2="781" stroke="#8e8e8e" stroke-width="1" stroke-dasharray="1,1"/>
<line x1="2282.5" y1="561" x2="2282.5" y2="781" stroke="#8e8e8e" stroke-width="1" stroke-dasharray="1,1"/>
<line x1="2477.5" y1="561" x2="2477.5" y2="781" stroke="#8e8e8e" stroke-width="1" stroke-dasharray="1,1"/>
<polygon points="1322.5,781.5 1322.23,781.5 1328.52,764.56 1335.9,760.47 1342.19,762.38 1355.32,749.54 1361.33,779.59 1368.44,730.42 1375.01,780.95 1381.57,750.9 1388.13,780.95 1394.42,692.17 1400.98,780.95 1407.55,747.35 1413.84,779.59 1420.4,760.47 1426.96,780.95 1433.25,717.58 1439.81,759.1 1446.38,744.89 1452.94,779.59 1458.68,753.09 1465.24,780.95 1471.53,711.29 1478.1,756.37 1484.39,735.88 1491.22,779.59 1497.51,746.81 1504.07,780.95 1510.36,727.68 1517.2,774.12 1523.49,685.34 1530.05,764.56 1536.34,692.17 1543.18,761.83 1549.47,718.12 1556.03,749.54 1562.59,719.49 1569.16,741.34 1575.44,711.84 1582.01,757.73 1588.3,717.58 1595.13,770.03 1601.42,735.06 1607.98,759.1 1614.55,742.16 1621.11,770.03 1627.4,707.74 1633.96,763.2 1640.53,700.37 1647.09,748.17 1653.38,733.15 1660.21,775.49 1666.5,730.96 1673.07,763.2 1679.35,692.99 1685.92,752.27 1692.21,703.1 1699.04,759.1 1705.33,712.66 1711.89,770.03 1718.46,712.11 1723.93,756.37 1731.31,744.07 1737.87,767.29 1744.44,742.71 1751,774.12 1757.83,780.95 1763.3,780.95 1770.69,742.16 1776.98,774.12 1783.54,729.05 1790.1,779.59 1796.66,755 1803.23,779.59 1809.52,752.27 1816.08,778.22 1822.64,724.13 1828.93,750.9 1835.49,739.98 1841.78,780.95 1848.62,733.69 1854.91,778.22 1861.47,715.39 1868.03,778.22 1874.6,739.43 1880.89,779.59 1886.9,758.28 1893.19,775.49 1899.44,749.55 1906.09,780.17 1912.75,725.58 1919.4,737.57 1925.79,685.64 1932.45,753.54 1938.57,632.39 1945.23,752.21 1951.35,668.34 1958.27,758.87 1964.66,716.27 1971.32,752.21 1977.71,668.34 1984.37,736.23 1990.49,681.65 1997.15,746.89 2003.54,692.83 2010.19,758.87 2016.58,663.01 2023.24,716.27 2029.63,692.3 2036.28,756.2 2042.41,685.64 2049.33,766.86 2055.45,635.05 2062.11,721.59 2068.5,693.63 2075.15,716.27 2081.54,714.93 2088.2,742.89 2094.59,685.64 2100.71,765.52 2107.64,700.29 2113.49,676.33 2120.42,716.27 2127.07,729.58 2133.46,657.69 2139.85,736.23 2146.51,696.3 2152.9,741.56 2159.29,635.05 2165.68,732.24 2172.33,641.71 2178.72,738.9 2185.38,685.64 2191.77,744.22 2198.42,603.1 2204.81,732.24 2211.47,685.64 2217.59,710.94 2224.52,694.96 2230.91,746.89 2237.29,668.34 2243.68,704.28 2250.34,629.73 2256.73,733.57 2263.39,690.97 2269.78,742.89 2276.43,692.3 2282.82,749.55 2289.48,677.66 2295.87,736.23 2302.26,702.95 2308.65,769.52 2314.77,636.39 2321.43,717.6 2327.82,693.63 2334.21,744.22 2340.6,677.66 2347.25,752.21 2353.64,688.31 2360.3,744.22 2366.69,690.97 2373.34,749.55 2379.73,698.96 2386.12,729.58 2392.51,627.87 2399.17,737.57 2405.56,644.37 2412.22,716.27 2418.6,718.93 2425.26,752.21 2431.65,690.97 2438.31,752.21 2444.43,681.65 2451.09,694.43 2457.48,694.43 2464.13,741.56 2470.52,691.77 2477.18,752.21 2483.57,684.31 2490.22,721.59 2490.5,781.5" fill="#00ff00"/>
<polyline points="1322.23,781.5 1328.52,764.56 1335.9,760.47 1342.19,762.38 1355.32,749.54 1361.33,779.59 1368.44,730.42 1375.01,780.95 1381.57,750.9 1388.13,780.95 1394.42,692.17 1400.98,780.95 1407.55,747.35 1413.84,779.59 1420.4,760.47 1426.96,780.95 1433.25,717.58 1439.81,759.1 1446.38,744.89 1452.94,779.59 1458.68,753.09 1465.24,780.95 1471.53,711.29 1478.1,756.37 1484.39,735.88 1491.22,779.59 1497.51,746.81 1504.07,780.95 1510.36,727.68 1517.2,774.12 1523.49,685.34 1530.05,764.56 1536.34,692.17 1543.18,761.83 1549.47,718.12 1556.03,749.54 1562.59,719.49 1569.16,741.34 1575.44,711.84 1582.01,757.73 1588.3,717.58 1595.13,770.03 1601.42,735.06 1607.98,759.1 1614.55,742.16 1621.11,770.03 1627.4,707.74 1633.96,763.2 1640.53,700.37 1647.09,748.17 1653.38,733.15 1660.21,775.49 1666.5,730.96 1673.07,763.2 1679.35,692.99 1685.92,752.27 1692.21,703.1 1699.04,759.1 1705.33,712.66 1711.89,770.03 1718.46,712.11 1723.93,756.37 1731.31,744.07 1737.87,767.29 1744.44,742.71 1751,774.12 1757.83,780.95 1763.3,780.95 1770.69,742.16 1776.98,774.12 1783.54,729.05 1790.1,779.59 1796.66,755 1803.23,779.59 1809.52,752.27 1816.08,778.22 1822.64,724.13 1828.93,750.9 1835.49,739.98 1841.78,780.95 1848.62,733.69 1854.91,778.22 1861.47,715.39 1868.03,778.22 1874.6,739.43 1880.89,779.59 1886.9,758.28 1893.19,775.49 1899.44,749.55 1906.09,780.17 1912.75,725.58 1919.4,737.57 1925.79,685.64 1932.45,753.54 1938.57,632.39 1945.23,752.21 1951.35,668.34 1958.27,758.87 1964.66,716.27 1971.32,752.21 1977.71,668.34 1984.37,736.23 1990.49,681.65 1997.15,746.89 2003.54,692.83 2010.19,758.87 2016.58,663.01 2023.24,716.27 2029.63,692.3 2036.28,756.2 2042.41,685.64 2049.33,766.86 2055.45,635.05 2062.11,721.59 2068.5,693.63 2075.15,716.27 2081.54,714.93 2088.2,742.89 2094.59,685.64 2100.71,765.52 2107.64,700.29 2113.49,676.33 2120.42,716.27 2127.07,729.58 2133.46,657.69 2139.85,736.23 2146.51,696.3 2152.9,741.56 2159.29,635.05 2165.68,732.24 2172.33,641.71 2178.72,738.9 2185.38,685.64 2191.77,744.22 2198.42,603.1 2204.81,732.24 2211.47,685.64 2217.59,710.94 2224.52,694.96 2230.91,746.89 2237.29,668.34 2243.68,704.28 2250.34,629.73 2256.73,733.57 2263.39,690.97 2269.78,742.89 2276.43,692.3 2282.82,749.55 2289.48,677.66 2295.87,736.23 2302.26,702.95 2308.65,769.52 2314.77,636.39 2321.43,717.6 2327.82,693.63 2334.21,744.22 2340.6,677.66 2347.25,752.21 2353.64,688.31 2360.3,744.22 2366.69,690.97 2373.34,749.55 2379.73,698.96 2386.12,729.58 2392.51,627.87 2399.17,737.57 2405.56,644.37 2412.22,716.27 2418.6,718.93 2425.26,752.21 2431.65,690.97 2438.31,752.21 2444.43,681.65 2451.09,694.43 2457.48,694.43 2464.13,741.56 2470.52,691.77 2477.18,752.21 2483.57,684.31 2490.22,721.59" fill="none" stroke="#00e8f0" stroke-width="1.3"/>
<polygon points="1431,781.5 1439,771.33 1447,781.5" fill="#808080"/>
<polygon points="1823.5,781.5 1829.5,760.28 1835.5,781.5" fill="#808080"/>
<polygon points="2211.6,781.5 2217.6,766.47 2223.6,781.5" fill="#808080"/>
<polygon points="1474,781.5 1478,777.96 1483,781.5" fill="#ff8c00"/>
<rect x="1724" y="561" width="195" height="220" fill="rgb(176,176,176)" fill-opacity="0.51"/><rect x="1919" y="561" width="1" height="220" fill="#ff0000"/>
<rect x="1322.5" y="560.5" width="1168" height="221" fill="none" stroke="#787878" stroke-width="1"/>
<rect x="1317" y="781" width="5" height="1" fill="#787878"/>
<text transform="translate(1306,787) scale(0.765,1)" font-size="14" text-anchor="end" fill="#fff" >0</text>
<rect x="1317" y="737" width="5" height="1" fill="#787878"/>
<text transform="translate(1306,743) scale(0.765,1)" font-size="14" text-anchor="end" fill="#fff" >1,000</text>
<rect x="1317" y="693" width="5" height="1" fill="#787878"/>
<text transform="translate(1306,699) scale(0.765,1)" font-size="14" text-anchor="end" fill="#fff" >2,000</text>
<rect x="1317" y="648" width="5" height="1" fill="#787878"/>
<text transform="translate(1306,654) scale(0.765,1)" font-size="14" text-anchor="end" fill="#fff" >3,000</text>
<rect x="1317" y="604" width="5" height="1" fill="#787878"/>
<text transform="translate(1306,610) scale(0.765,1)" font-size="14" text-anchor="end" fill="#fff" >4,000</text>
<rect x="1317" y="560" width="5" height="1" fill="#787878"/>
<text transform="translate(1306,566) scale(0.765,1)" font-size="14" text-anchor="end" fill="#fff" >5,000</text>
<rect x="1504" y="782" width="1" height="4" fill="#787878"/>
<text transform="translate(1504.5,802) scale(0.83,1)" font-size="13" text-anchor="middle" fill="#fff" >1:35:00 PM</text>
<rect x="1698" y="782" width="1" height="4" fill="#787878"/>
<text transform="translate(1698.5,802) scale(0.83,1)" font-size="13" text-anchor="middle" fill="#fff" >1:40:00 PM</text>
<rect x="1893" y="782" width="1" height="4" fill="#787878"/>
<text transform="translate(1893.5,802) scale(0.83,1)" font-size="13" text-anchor="middle" fill="#fff" >1:45:00 PM</text>
<rect x="2088" y="782" width="1" height="4" fill="#787878"/>
<text transform="translate(2088.5,802) scale(0.83,1)" font-size="13" text-anchor="middle" fill="#fff" >1:50:00 PM</text>
<rect x="2282" y="782" width="1" height="4" fill="#787878"/>
<text transform="translate(2282.5,802) scale(0.83,1)" font-size="13" text-anchor="middle" fill="#fff" >1:55:00 PM</text>
<rect x="2477" y="782" width="1" height="4" fill="#787878"/>
<text transform="translate(2477.5,802) scale(0.83,1)" font-size="13" text-anchor="middle" fill="#fff" >2:00:00 PM</text>
<rect x="1697" y="847" width="22" height="13" fill="#00ffff"/><text x="1723.5" y="860" font-size="13" fill="#fff" textLength="41" lengthAdjust="spacingAndGlyphs">Network</text><rect x="1785" y="847" width="22" height="13" fill="#00ff00"/><text x="1812" y="860" font-size="13" fill="#fff" textLength="25" lengthAdjust="spacingAndGlyphs">CPU</text><rect x="1854" y="847" width="22" height="13" fill="#4169e1"/><text x="1881" y="860" font-size="13" fill="#fff" textLength="42" lengthAdjust="spacingAndGlyphs">Memory</text><rect x="1941" y="847" width="22" height="13" fill="#ff8c00"/><text x="1968" y="860" font-size="13" fill="#fff" textLength="22.5" lengthAdjust="spacingAndGlyphs">Disk</text><rect x="2008" y="847" width="22" height="13" fill="#808080"/><text x="2035" y="860" font-size="13" fill="#fff" textLength="28" lengthAdjust="spacingAndGlyphs">Other</text>
<line x1="1315" y1="992.5" x2="1852" y2="992.5" stroke="#8e8e8e" stroke-width="1" stroke-dasharray="1,1"/>
<line x1="1315" y1="1034.5" x2="1852" y2="1034.5" stroke="#8e8e8e" stroke-width="1" stroke-dasharray="1,1"/>
<line x1="1315" y1="1075.5" x2="1852" y2="1075.5" stroke="#8e8e8e" stroke-width="1" stroke-dasharray="1,1"/>
<line x1="1315" y1="1117.5" x2="1852" y2="1117.5" stroke="#8e8e8e" stroke-width="1" stroke-dasharray="1,1"/>
<line x1="1398.5" y1="952" x2="1398.5" y2="1158" stroke="#8e8e8e" stroke-width="1" stroke-dasharray="1,1"/>
<line x1="1488.5" y1="952" x2="1488.5" y2="1158" stroke="#8e8e8e" stroke-width="1" stroke-dasharray="1,1"/>
<line x1="1577.5" y1="952" x2="1577.5" y2="1158" stroke="#8e8e8e" stroke-width="1" stroke-dasharray="1,1"/>
<line x1="1667.5" y1="952" x2="1667.5" y2="1158" stroke="#8e8e8e" stroke-width="1" stroke-dasharray="1,1"/>
<line x1="1756.5" y1="952" x2="1756.5" y2="1158" stroke="#8e8e8e" stroke-width="1" stroke-dasharray="1,1"/>
<line x1="1846.5" y1="952" x2="1846.5" y2="1158" stroke="#8e8e8e" stroke-width="1" stroke-dasharray="1,1"/>
<polyline points="1314.5,1157.67 1320.48,1156.64 1326.46,1157.05 1332.43,1156.84 1338.41,1157.26 1344.39,1158.09 1350.37,1156.84 1356.34,1156.43 1362.32,1157.67 1368.3,1157.67 1374.28,1156.84 1380.26,1156.84 1386.23,1146.7 1392.21,1156.64 1398.19,1157.67 1404.17,1156.64 1410.14,1158.29 1416.12,1158.09 1422.1,1157.26 1428.08,1156.64 1434.06,1158.09 1440.03,1156.43 1446.01,1158.09 1451.99,1156.43 1457.97,1156.84 1463.94,1158.29 1469.92,1158.29 1475.9,1158.29 1481.88,1156.84 1487.86,1156.64 1493.83,1157.05 1499.81,1157.26 1505.79,1158.09 1511.77,1156.64 1517.74,1156.84 1523.72,1157.67 1529.7,1156.43 1535.68,1158.29 1541.66,1156.43 1547.63,1158.29 1553.61,1158.29 1559.59,1157.05 1565.57,1158.29 1571.54,1157.67 1577.52,1157.05 1583.5,1158.09 1589.48,1156.43 1595.46,1156.64 1601.43,1157.05 1607.41,1157.26 1613.39,1157.67 1619.37,1156.43 1625.34,1156.43 1631.32,1157.26 1637.3,1157.26 1643.28,1156.84 1649.26,1156.84 1655.23,1157.26 1661.21,1157.05 1667.19,1157.26 1673.17,1158.29 1679.14,1156.64 1685.12,1158.09 1691.1,1156.43 1697.08,1158.29 1703.06,1158.29 1709.03,1157.26 1715.01,1158.09 1720.99,1158.09 1726.97,1158.29 1732.94,1157.05 1738.92,1156.43 1744.9,1157.67 1750.88,1158.09 1756.86,1156.43 1762.83,1158.09 1768.81,1157.26 1774.79,1157.26 1780.77,1158.09 1786.74,1157.67 1792.72,1158.29 1798.7,1156.43 1804.68,1156.43 1810.66,1156.64 1816.63,1158.09 1822.61,1157.05 1828.59,1157.05 1834.57,1157.05 1840.54,1156.64 1846.52,1158.29 1852.5,1158.29" fill="none" stroke="#20b2aa" stroke-width="1.2"/>
<polyline points="1314.5,1158.5 1362.8,1158.5 1368.8,1042.58 1374.8,1158.5 1541.5,1158.5 1547.5,996 1553.5,1158.5 1720.9,1158.5 1726.9,980.48 1732.9,1158.5 1852,1158.5" fill="none" stroke="#98fb98" stroke-width="1.2"/>
<rect x="1500" y="952" width="89" height="206" fill="rgb(176,176,176)" fill-opacity="0.51"/><rect x="1589" y="952" width="1" height="206" fill="#ff0000"/>
<rect x="1314.5" y="951.5" width="538" height="207" fill="none" stroke="#787878" stroke-width="1"/>
<rect x="1309" y="1158" width="5" height="1" fill="#787878"/>
<text transform="translate(1307,1164) scale(0.765,1)" font-size="14" text-anchor="end" fill="#fff" >0</text>
<rect x="1309" y="1117" width="5" height="1" fill="#787878"/>
<text transform="translate(1307,1123) scale(0.765,1)" font-size="14" text-anchor="end" fill="#fff" >200</text>
<rect x="1309" y="1075" width="5" height="1" fill="#787878"/>
<text transform="translate(1307,1081) scale(0.765,1)" font-size="14" text-anchor="end" fill="#fff" >400</text>
<rect x="1309" y="1034" width="5" height="1" fill="#787878"/>
<text transform="translate(1307,1040) scale(0.765,1)" font-size="14" text-anchor="end" fill="#fff" >600</text>
<rect x="1309" y="992" width="5" height="1" fill="#787878"/>
<text transform="translate(1307,998) scale(0.765,1)" font-size="14" text-anchor="end" fill="#fff" >800</text>
<rect x="1309" y="951" width="5" height="1" fill="#787878"/>
<text transform="translate(1307,957) scale(0.765,1)" font-size="14" text-anchor="end" fill="#fff" >1,000</text>
<rect x="1398" y="1159" width="1" height="4" fill="#787878"/>
<text transform="translate(1398.5,1179) scale(0.83,1)" font-size="13" text-anchor="middle" fill="#fff" >1:35:00 PM</text>
<rect x="1488" y="1159" width="1" height="4" fill="#787878"/>
<text transform="translate(1488.5,1179) scale(0.83,1)" font-size="13" text-anchor="middle" fill="#fff" >1:40:00 PM</text>
<rect x="1577" y="1159" width="1" height="4" fill="#787878"/>
<text transform="translate(1577.5,1179) scale(0.83,1)" font-size="13" text-anchor="middle" fill="#fff" >1:45:00 PM</text>
<rect x="1667" y="1159" width="1" height="4" fill="#787878"/>
<text transform="translate(1667.5,1179) scale(0.83,1)" font-size="13" text-anchor="middle" fill="#fff" >1:50:00 PM</text>
<rect x="1756" y="1159" width="1" height="4" fill="#787878"/>
<text transform="translate(1756.5,1179) scale(0.83,1)" font-size="13" text-anchor="middle" fill="#fff" >1:55:00 PM</text>
<rect x="1846" y="1159" width="1" height="4" fill="#787878"/>
<text transform="translate(1846.5,1179) scale(0.83,1)" font-size="13" text-anchor="middle" fill="#fff" >2:00:00 PM</text>
<rect x="1455" y="1238" width="22" height="13" fill="#98fb98"/><text x="1482" y="1251" font-size="13" fill="#fff" textLength="45" lengthAdjust="spacingAndGlyphs">ms/Read</text><rect x="1547" y="1238" width="22" height="13" fill="#20b2aa"/><text x="1574" y="1251" font-size="13" fill="#fff" textLength="45.5" lengthAdjust="spacingAndGlyphs">ms/Write</text>
<line x1="1983" y1="1003.5" x2="2491" y2="1003.5" stroke="#8e8e8e" stroke-width="1" stroke-dasharray="1,1"/>
<line x1="1983" y1="1054.5" x2="2491" y2="1054.5" stroke="#8e8e8e" stroke-width="1" stroke-dasharray="1,1"/>
<line x1="1983" y1="1106.5" x2="2491" y2="1106.5" stroke="#8e8e8e" stroke-width="1" stroke-dasharray="1,1"/>
<line x1="2061.5" y1="952" x2="2061.5" y2="1158" stroke="#8e8e8e" stroke-width="1" stroke-dasharray="1,1"/>
<line x1="2146.5" y1="952" x2="2146.5" y2="1158" stroke="#8e8e8e" stroke-width="1" stroke-dasharray="1,1"/>
<line x1="2231.5" y1="952" x2="2231.5" y2="1158" stroke="#8e8e8e" stroke-width="1" stroke-dasharray="1,1"/>
<line x1="2316.5" y1="952" x2="2316.5" y2="1158" stroke="#8e8e8e" stroke-width="1" stroke-dasharray="1,1"/>
<line x1="2401.5" y1="952" x2="2401.5" y2="1158" stroke="#8e8e8e" stroke-width="1" stroke-dasharray="1,1"/>
<line x1="2486.5" y1="952" x2="2486.5" y2="1158" stroke="#8e8e8e" stroke-width="1" stroke-dasharray="1,1"/>
<polyline points="1982.47,1137.8 1988.9,1127.45 1996.73,1062.24 1999.8,1158.5 2005.4,1119.17 2010.99,1158.5 2016.58,1065.35 2022.17,1117.1 2027.76,1158.5 2033.35,1037.4 2038.94,1122.28 2044.53,1158.5 2050.41,1077.77 2056,1127.45 2061.59,1142.97 2067.18,1091.22 2073.33,1096.4 2078.92,1122.28 2084.51,1158.5 2090.1,974.27 2095.69,1117.1 2101.29,1158.5 2106.88,1065.35 2112.47,1127.45 2118.34,1153.33 2123.93,1101.58 2129.52,1080.88 2135.11,1153.33 2140.7,1127.45 2146.3,1094.33 2152.17,1122.28 2157.76,1137.8 2163.35,1079.84 2168.94,1132.62 2174.81,1151.26 2180.4,1078.81 2185.99,1111.92 2191.59,1153.33 2197.46,1074.66 2203.05,1079.84 2208.64,1153.33 2214.23,1101.58 2219.82,1096.4 2225.41,1153.33 2231,1127.45 2236.87,1087.09 2242.47,1132.62 2248.06,1132.62 2253.93,1041.55 2259.52,1123.31 2265.11,1133.66 2270.7,1076.73 2276.29,1122.28 2282.16,1153.33 2287.76,1102.61 2293.35,1096.4 2298.94,1148.15 2304.53,1086.05 2310.4,1078.81 2315.99,1153.33 2321.58,1127.45 2327.45,1064.32 2333.04,1137.8 2338.64,1125.38 2344.23,1113.99 2349.82,1095.37 2355.69,1137.8 2361.28,1111.92 2366.87,1067.42 2372.46,1110.89 2378.33,1112.96 2383.93,1065.35 2389.52,1142.97 2395.11,1111.92 2400.7,1088.12 2406.57,1153.33 2412.16,1127.45 2417.75,1078.81 2423.34,1132.62 2429.21,1096.4 2434.81,1098.47 2440.4,1111.92 2445.99,1127.45 2451.58,1153.33 2457.45,1058.11 2463.04,1122.28 2468.63,1153.33 2474.5,1071.56 2480.1,1101.58 2485.69,1142.97 2491.28,1082.94" fill="none" stroke="#daa520" stroke-width="1.2"/>
<rect x="2157" y="952" width="85" height="206" fill="rgb(176,176,176)" fill-opacity="0.51"/><rect x="2242" y="952" width="1" height="206" fill="#ff0000"/>
<rect x="1982.5" y="951.5" width="509" height="207" fill="none" stroke="#787878" stroke-width="1"/>
<rect x="1977" y="1158" width="5" height="1" fill="#787878"/>
<text transform="translate(1975,1164) scale(0.765,1)" font-size="14" text-anchor="end" fill="#fff" >0</text>
<rect x="1977" y="1106" width="5" height="1" fill="#787878"/>
<text transform="translate(1975,1112) scale(0.765,1)" font-size="14" text-anchor="end" fill="#fff" >0.5</text>
<rect x="1977" y="1054" width="5" height="1" fill="#787878"/>
<text transform="translate(1975,1060) scale(0.765,1)" font-size="14" text-anchor="end" fill="#fff" >1</text>
<rect x="1977" y="1003" width="5" height="1" fill="#787878"/>
<text transform="translate(1975,1009) scale(0.765,1)" font-size="14" text-anchor="end" fill="#fff" >1.5</text>
<rect x="1977" y="951" width="5" height="1" fill="#787878"/>
<text transform="translate(1975,957) scale(0.765,1)" font-size="14" text-anchor="end" fill="#fff" >2</text>
<rect x="2061" y="1159" width="1" height="4" fill="#787878"/>
<text transform="translate(2061.5,1176) scale(0.83,1)" font-size="13" text-anchor="middle" fill="#fff" >1:35:00 PM</text>
<rect x="2146" y="1159" width="1" height="4" fill="#787878"/>
<text transform="translate(2146.5,1176) scale(0.83,1)" font-size="13" text-anchor="middle" fill="#fff" >1:40:00 PM</text>
<rect x="2231" y="1159" width="1" height="4" fill="#787878"/>
<text transform="translate(2231.5,1176) scale(0.83,1)" font-size="13" text-anchor="middle" fill="#fff" >1:45:00 PM</text>
<rect x="2316" y="1159" width="1" height="4" fill="#787878"/>
<text transform="translate(2316.5,1176) scale(0.83,1)" font-size="13" text-anchor="middle" fill="#fff" >1:50:00 PM</text>
<rect x="2401" y="1159" width="1" height="4" fill="#787878"/>
<text transform="translate(2401.5,1176) scale(0.83,1)" font-size="13" text-anchor="middle" fill="#fff" >1:55:00 PM</text>
<rect x="2486" y="1159" width="1" height="4" fill="#787878"/>
<text transform="translate(2486.5,1176) scale(0.83,1)" font-size="13" text-anchor="middle" fill="#fff" >2:00:00 PM</text>
<rect x="2168" y="1239" width="22" height="13" fill="#daa520"/><text x="2194" y="1252" font-size="13" fill="#fff" textLength="82" lengthAdjust="spacingAndGlyphs">Log Flushes/sec</text>
</svg>
<div class="abs" style="left:631px;top:260px;width:300px;height:133px;background:rgba(0,0,0,0.45);filter:blur(2px)"></div>
<div class="abs" style="left:628px;top:256px;width:300px;height:133px;background:#fcfcfc;border:1px solid #a0a0a0">
  <div class="abs" style="left:0;top:30px;width:24px;height:102px;background:linear-gradient(to right,#f1f1f1,#f6f6f6)"></div>
  <div class="abs" style="left:-1px;top:-1px;width:300px;height:30px;background:#b8d8f3;border:3px solid #c8102e"></div>
  <div class="mi" style="top:5px">Zoom In</div>
  <div class="mi" style="top:31px">Jump To</div>
  <div class="mi" style="top:57px">Sample Mode</div>
  <div class="mi" style="top:83px">Create Baseline</div>
  <div class="mi" style="top:109px">Show Advisory Condition Markers</div>
  <svg class="abs" style="left:283px;top:36px" width="7" height="10"><path d="M1 0 L6 5 L1 10 Z" fill="#000"/></svg>
  <div class="abs" style="left:-1px;top:107px;width:24px;height:22px;background:#cce4f7;border:1px solid #3d8ee0"></div>
  <svg class="abs" style="left:5px;top:113px" width="13" height="10"><path d="M1.5 5 L5 8.5 L11.5 1.5" stroke="#111" stroke-width="1.5" fill="none"/></svg>
  <svg class="abs" style="left:216px;top:34px" width="18" height="60"><path d="M9 1.5 L16 15 L2 15 Z" fill="#c8102e"/><line x1="9" y1="12" x2="9" y2="56" stroke="#c8102e" stroke-width="5" stroke-linecap="round"/></svg>
</div>
<svg class="abs" style="left:772px;top:262px" width="14" height="21" viewBox="0 0 14 21"><path d="M1 1 L1 16 L4.5 12.5 L7.5 19 L9.5 18 L6.8 11.8 L11.5 11.8 Z" fill="#fff" stroke="#000" stroke-width="1"/></svg>
</body></html>
